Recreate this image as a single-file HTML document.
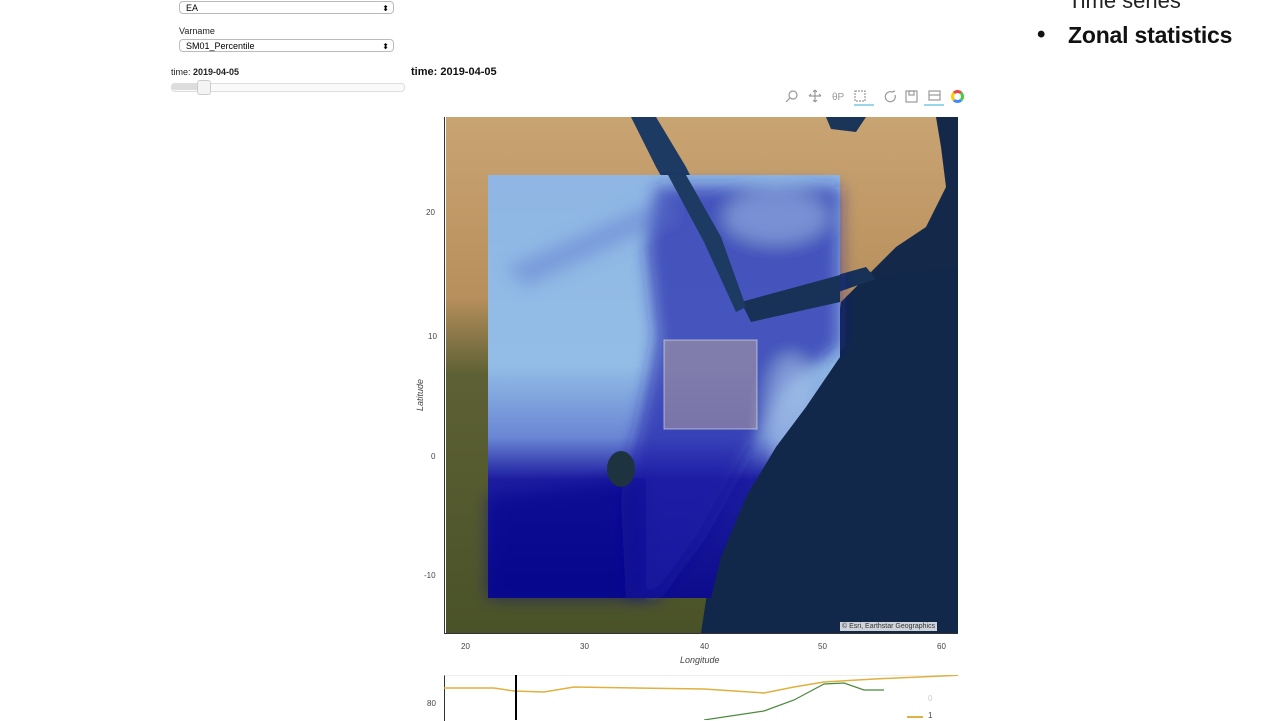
<!DOCTYPE html>
<html><head><meta charset="utf-8"><style>
body{margin:0;width:1280px;height:720px;background:#fff;position:relative;overflow:hidden;font-family:"Liberation Sans",sans-serif}
.a{position:absolute}
.sel{position:absolute;left:179px;width:215px;height:13px;border:1px solid #bbb;border-radius:4px;font-size:9px;line-height:13px;padding-left:6px;box-sizing:border-box;background:#fff}
.sel:after{content:"⬍";position:absolute;right:4px;top:0;font-size:8px}
.t{font-size:8px;color:#444}
</style></head><body>
<div class="sel" style="top:1px">EA</div>
<div class="a t" style="left:179px;top:26px;font-size:9px;color:#222">Varname</div>
<div class="sel" style="top:39px">SM01_Percentile</div>
<div class="a" style="left:171px;top:67px;font-size:9px;color:#222">time: <b>2019-04-05</b></div>
<div class="a" style="left:171px;top:83px;width:232px;height:7px;border:1px solid #ddd;border-radius:4px;background:#fafafa"></div>
<div class="a" style="left:171px;top:83px;width:34px;height:7px;background:#ddd;border-radius:4px"></div>
<div class="a" style="left:197px;top:80px;width:12px;height:13px;border:1px solid #ccc;border-radius:3px;background:#f4f4f4"></div>
<div class="a" style="left:411px;top:66px;font-size:11px;font-weight:bold;color:#111">time: 2019-04-05</div>
<svg class="a" style="left:784px;top:88px" width="170" height="20" fill="none" stroke="#999" stroke-width="1.2">
<circle cx="9" cy="7" r="4"/><line x1="6" y1="10" x2="2" y2="14"/>
<path d="M31 2v12M25 8h12M31 2l-2 2M31 2l2 2M31 14l-2-2M31 14l2-2M25 8l2-2M37 8l-2-2"/>
<text x="48" y="12" font-size="10" fill="#999" stroke="none" font-family="Liberation Sans">θP</text>
<rect x="71" y="3" width="10" height="10" stroke-dasharray="2 1"/><line x1="70" y1="17" x2="90" y2="17" stroke="#5bc0de"/>
<path d="M108 4a5 5 0 1 0 3 3M108 4l3-1"/>
<rect x="122" y="3" width="11" height="11"/><rect x="125" y="3" width="5" height="4"/>
<rect x="145" y="3" width="11" height="9"/><line x1="145" y1="7" x2="156" y2="7"/><line x1="140" y1="17" x2="160" y2="17" stroke="#5bc0de"/>
</svg>
<div class="a" style="left:951px;top:90px;width:13px;height:13px;border-radius:50%;border:3px solid;border-color:#e44 #4c4 #48f #fc0;box-sizing:border-box"></div>
<div class="a" style="left:1068px;top:-12px;font-size:22px;color:#222">Time series</div>
<div class="a" style="left:1037px;top:21px;font-size:24px;font-weight:bold;color:#111">•</div>
<div class="a" style="left:1068px;top:22px;font-size:23px;font-weight:bold;color:#111;letter-spacing:-0.2px">Zonal statistics</div>
<!-- map -->
<svg class="a" style="left:446px;top:117px" width="512" height="516">
<defs>
<linearGradient id="land" x1="0" y1="0" x2="0" y2="1"><stop offset="0" stop-color="#c9a473"/><stop offset=".35" stop-color="#b78f5c"/><stop offset=".5" stop-color="#5d6034"/><stop offset="1" stop-color="#4a5228"/></linearGradient>
<linearGradient id="ov" x1="0" y1="0" x2="0" y2="1"><stop offset="0" stop-color="#8fb6e4"/><stop offset=".45" stop-color="#93bde6"/><stop offset=".62" stop-color="#6a86d4"/><stop offset=".72" stop-color="#1c1ca0"/><stop offset="1" stop-color="#0c0c8c"/></linearGradient>
<filter id="b"><feGaussianBlur stdDeviation="8"/></filter>
</defs>
<rect width="512" height="516" fill="url(#land)"/>
<polygon points="490,0 512,0 512,160 420,160 450,130 480,110 500,70 495,30" fill="#14294a"/>
<polygon points="380,0 420,0 410,15 385,12" fill="#1b3559"/>
<polygon points="512,150 512,516 255,516 262,470 290,400 330,330 370,270 390,220 395,185 420,160" fill="#12284a"/>
<polygon points="185,0 210,0 240,50 275,120 300,190 290,195 255,130 210,50" fill="#1c3a62"/>
<polygon points="295,185 420,150 430,162 305,205" fill="#173256"/>
<rect x="42" y="58" width="352" height="423" fill="url(#ov)"/>
<g filter="url(#b)">
<polygon points="210,70 394,70 394,230 340,270 300,340 255,420 210,481 180,481 175,380 195,300 210,220 200,130" fill="#2020a8" opacity=".65"/>
<ellipse cx="330" cy="100" rx="50" ry="25" fill="#9ab8e4" opacity=".6"/>
<ellipse cx="345" cy="300" rx="25" ry="60" fill="#a6c4ea" opacity=".6"/>
<polygon points="60,150 220,80 230,100 80,170" fill="#5a70cc" opacity=".4"/>
<polygon points="42,380 200,360 200,481 42,481" fill="#0c0c8c" opacity=".5"/>
</g>
<polygon points="394,180 394,240 360,290 330,330 300,380 275,440 265,481 394,481" fill="#12284a"/>
<polygon points="295,185 394,158 394,185 305,205" fill="#173256"/>
<polygon points="222,58 240,58 275,120 300,190 290,195 258,125" fill="#1c3a62"/>
<ellipse cx="175" cy="352" rx="14" ry="18" fill="#1e3340"/>
<rect x="218" y="223" width="93" height="89" fill="rgba(200,175,150,.45)" stroke="rgba(255,255,255,.5)"/>
</svg>
<div class="a" style="left:840px;top:622px;background:rgba(255,255,255,.8);font-size:7px;padding:1px 2px;color:#333">© Esri, Earthstar Geographics</div>
<!-- axes -->
<div class="a" style="left:444px;top:117px;width:1px;height:517px;background:#333"></div>
<div class="a" style="left:444px;top:633px;width:514px;height:1px;background:#333"></div>
<div class="a t" style="left:426px;top:208px">20</div>
<div class="a t" style="left:428px;top:332px">10</div>
<div class="a t" style="left:431px;top:452px">0</div>
<div class="a t" style="left:424px;top:571px">-10</div>
<div class="a t" style="left:404px;top:390px;transform:rotate(-90deg);font-size:9px;font-style:italic">Latitude</div>
<div class="a t" style="left:461px;top:642px">20</div>
<div class="a t" style="left:580px;top:642px">30</div>
<div class="a t" style="left:700px;top:642px">40</div>
<div class="a t" style="left:818px;top:642px">50</div>
<div class="a t" style="left:937px;top:642px">60</div>
<div class="a t" style="left:680px;top:655px;font-size:9px;font-style:italic">Longitude</div>
<!-- timeseries -->
<div class="a" style="left:444px;top:675px;width:514px;height:45px;border-left:1px solid #333;border-top:1px solid #eee"></div>
<div class="a t" style="left:427px;top:699px">80</div>
<svg class="a" style="left:444px;top:675px" width="514" height="45">
<polyline fill="none" stroke="#e0b040" stroke-width="1.5" points="0,13 50,13 70,16 100,17 130,12 260,14 320,18 350,12 380,7 430,4 520,0"/>
<polyline fill="none" stroke="#4a8a3c" stroke-width="1.2" points="260,45 320,36 350,25 380,9 400,8 420,15 440,15"/>
<line x1="72" y1="0" x2="72" y2="45" stroke="#000" stroke-width="2"/>
</svg>
<div class="a t" style="left:928px;top:694px;color:#ccc">0</div>
<div class="a t" style="left:928px;top:711px">1</div>
<div class="a" style="left:907px;top:716px;width:16px;height:2px;background:#e0b040"></div>
</body></html>
